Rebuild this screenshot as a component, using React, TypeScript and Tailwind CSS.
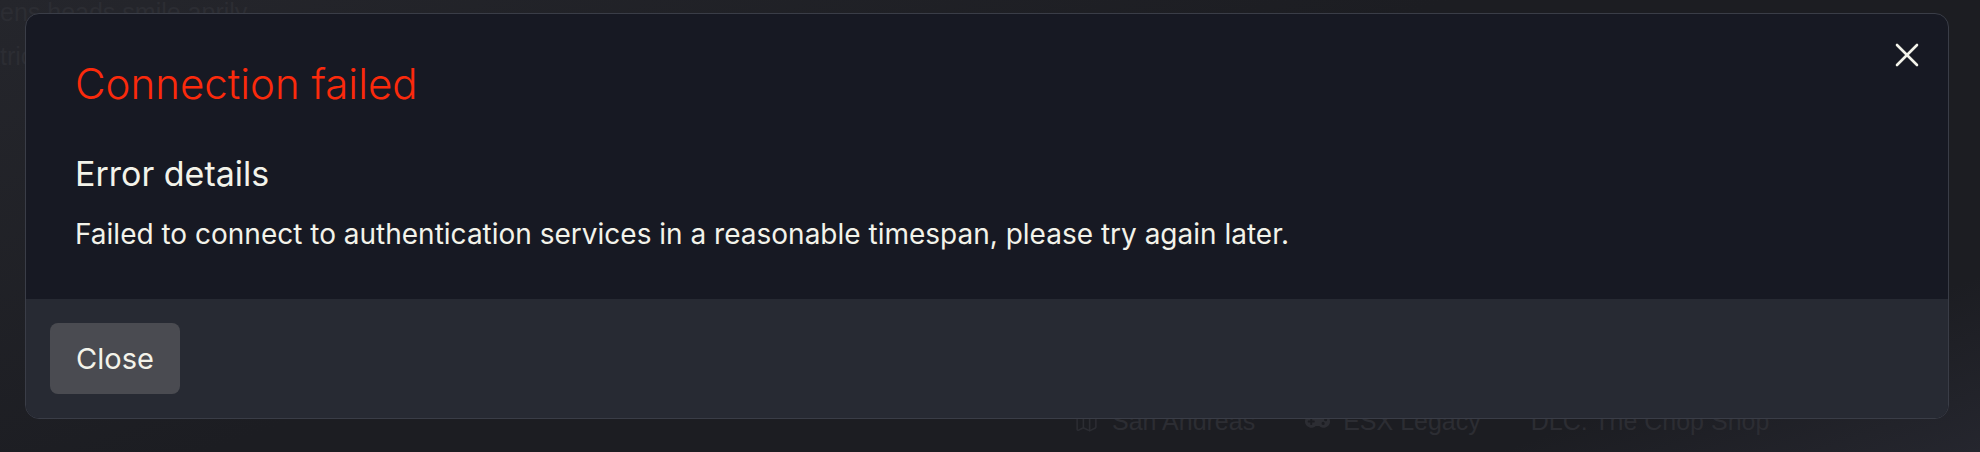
import { Map } from "lucide-react";
import { FaGamepad } from "react-icons/fa";

// Backdrop page (dimmed) + error modal on top

function BackdropPage() {
  return (
    <div className="flex h-full flex-col justify-between text-[25px] leading-[44px] text-[#2c2d33] [font-family:'Liberation_Sans',sans-serif]">
      <div className="-mt-[10px]">
        <div>ens heads smile aprily</div>
        <div>tric</div>
      </div>
      <div className="mb-[9px] flex items-center gap-[50px] pl-[1074px]">
        <div className="flex items-center gap-[13px]">
          <Map className="h-[25px] w-[25px]" strokeWidth={1.5} />
          <span>San Andreas</span>
        </div>
        <div className="flex items-center gap-[13px]">
          <FaGamepad className="h-[25px] w-[25px]" />
          <span>ESX Legacy</span>
        </div>
        <span>DLC: The Chop Shop</span>
      </div>
    </div>
  );
}

export default function App() {
  return (
    <div className="relative h-[452px] w-full overflow-hidden bg-[linear-gradient(160deg,#25262c_0%,#1c1d22_45%,#1c1d22_85%,#25262e_100%)]">
      <BackdropPage />

      <div className="absolute left-[25px] top-[13px] flex h-[406px] w-[1924px] flex-col overflow-hidden rounded-[14px] border border-[#3a3d47] bg-[#171923] text-[#f3f3ea] [font-family:Inter,'Noto_Sans',sans-serif]">
        <button
          type="button"
          className="absolute right-[29px] top-[29px] flex h-[24px] w-[24px] items-center justify-center text-[#f3f3ea]"
        >
          <svg viewBox="0 0 24 24" className="h-[24px] w-[24px]" fill="none" stroke="currentColor" strokeWidth={2.6} strokeLinecap="round">
            <line x1="2" y1="2" x2="22" y2="22" />
            <line x1="22" y1="2" x2="2" y2="22" />
          </svg>
        </button>

        <div className="flex-1 px-[49px] pt-[45px]">
          <h2 className="text-[42px] font-light leading-[50px] text-[#fb2a0c]">
            Connection failed
          </h2>
          <h3 className="mt-[45px] text-[34px] font-normal leading-[40px]">
            Error details
          </h3>
          <p className="mt-[23px] text-[28px] leading-[34px]">
            Failed to connect to authentication services in a reasonable timespan, please try again later.
          </p>
        </div>

        <div className="flex h-[119px] items-start bg-[#272a33] px-[24px] pt-[24px]">
          <button
            type="button"
            className="flex h-[71px] w-[130px] items-center justify-center rounded-[8px] bg-[#4a4b51] text-[29px] leading-none text-[#f3f3ea]"
          >
            Close
          </button>
        </div>
      </div>
    </div>
  );
}
